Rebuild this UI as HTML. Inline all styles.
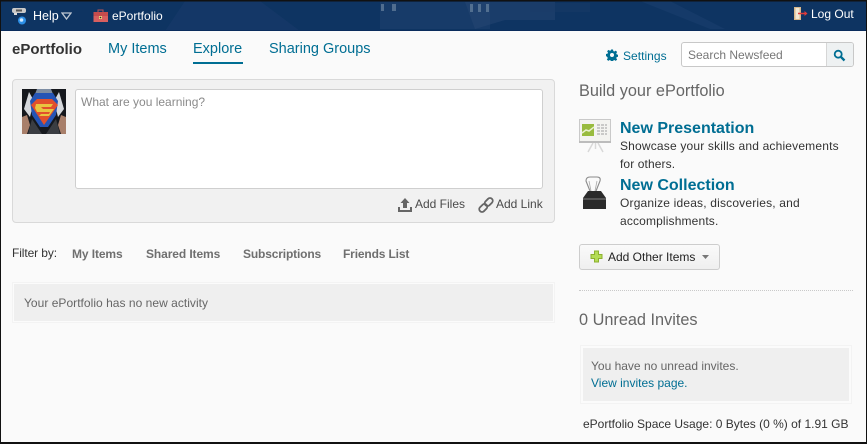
<!DOCTYPE html>
<html><head><meta charset="utf-8">
<style>
html,body{margin:0;padding:0}
body{width:867px;height:444px;overflow:hidden;position:relative;background:#fafafa;font-family:"Liberation Sans",sans-serif;font-size:12px;color:#333}
.a{position:absolute;white-space:nowrap;line-height:1}
.box{position:absolute;box-sizing:border-box}
</style></head><body>

<!-- top bar -->
<div class="box" style="left:0;top:0;width:867px;height:31px;background:#0e3462;overflow:hidden">
<svg width="867" height="31" style="position:absolute;left:0;top:0">
<path d="M165 31L185 1H260L300 31Z" fill="#17396a" opacity=".7"/>
<path d="M380 2h110v27h-110Z" fill="#1f4270" opacity=".5"/>
<path d="M465 2h90v18h-50l-30 9Z" fill="#2a4a75" opacity=".45"/>
<path d="M470 4h3v8h-3zM478 4h3v8h-3zM486 4h3v8h-3zM381 4h3v7h-3zM392 4h4v7h-4z" fill="#5f7a99" opacity=".8"/>
<path d="M640 1l70 28h15l-55-28Z" fill="#1c4070" opacity=".5"/>
<path d="M530 3h60v9h-60Z" fill="#1b3c68" opacity=".4"/>
<path d="M0 0h867v1.500H0Z" fill="#111"/>
<path d="M0 30h867v1H0Z" fill="#0a2c5c"/>
</svg>
<svg width="20" height="20" style="position:absolute;left:11px;top:7px" viewBox="0 0 20 20">
<rect x="1" y="1" width="14" height="5" rx="2" fill="#c9c9c9"/><rect x="5" y="2.500" width="6" height="2" fill="#555"/>
<path d="M3 6h3v2H3z" fill="#ddd"/><circle cx="11" cy="13.500" r="4" fill="#2c8fe6"/><circle cx="10.500" cy="13" r="1.800" fill="#cfe8ff"/>
</svg>
<div class="a" style="left:33px;top:10px;color:#fff;font-size:12.500px">Help</div>
<svg width="11" height="8" style="position:absolute;left:61px;top:12px"><path d="M1 1H10L5.500 7Z" fill="none" stroke="#bfc8d2" stroke-width="1.300"/></svg>
<svg width="16" height="14" style="position:absolute;left:93px;top:9px" viewBox="0 0 16 14">
<path d="M5 3V1h5v2" fill="none" stroke="#b55" stroke-width="1"/><rect x="0.500" y="3" width="14.500" height="10" fill="#d85f5f"/><rect x="0.500" y="3" width="14.500" height="4" fill="#c64c4c"/><rect x="6" y="7" width="3" height="3" fill="#ecd27c"/><circle cx="7.500" cy="8.500" r=".8" fill="#322"/>
</svg>
<div class="a" style="left:112px;top:10px;color:#fff;font-size:12px">ePortfolio</div>
<svg width="16" height="16" style="position:absolute;left:793px;top:5px" viewBox="0 0 16 16">
<rect x="1" y="2" width="7" height="13" fill="#d9b98d"/><rect x="2.500" y="3" width="4" height="11" fill="#f1e8d4"/>
<path d="M5 8.500h8" stroke="#e03a3a" stroke-width="1.500"/><path d="M11.500 6l3 2.500-3 2.500Z" fill="#e03a3a"/>
</svg>
<div class="a" style="left:811px;top:8px;color:#fff;font-size:12px">Log Out</div>
</div>

<!-- tabs -->
<div class="a" style="left:12px;top:42px;font-size:15px;font-weight:bold;color:#333">ePortfolio</div>
<div class="a" style="left:108px;top:42px;font-size:14.500px;color:#006e93">My Items</div>
<div class="a" style="left:193px;top:42px;font-size:14.500px;color:#006e93">Explore</div>
<div class="box" style="left:193px;top:62px;width:50px;height:2px;background:#006e93"></div>
<div class="a" style="left:269px;top:42px;font-size:14.500px;color:#006e93">Sharing Groups</div>

<!-- composer -->
<div class="box" style="left:12px;top:79px;width:543px;height:144px;background:#f1f1f1;border:1px solid #d9d9d9;border-radius:4px"></div>
<svg width="44" height="45" style="position:absolute;left:22px;top:89px" viewBox="0 0 44 45">
<rect width="44" height="45" fill="#15181d"/>
<path d="M15 0H29L31 5H13Z" fill="#7d8da3"/>
<path d="M7 3L12 12 8 28 2 20ZM37 3L32 12 36 28 42 20Z" fill="#d5d8dc"/>
<path d="M13 4H31L36 12 34 26 26 38H18L10 26 8 12Z" fill="#2554b5"/>
<path d="M9 16L15 10H30L36 16 22 36Z" fill="#e2502c"/>
<path d="M14 15H31L29 18H19L21 20H32L27 27H17L19 25H27L28 23H15L13 19Z" fill="#e9c53f"/>
<path d="M0 28L5 26 8 36 5 45H0ZM44 28L39 26 36 36 39 45H44Z" fill="#a87f6a"/>
<path d="M10 30L20 45H6ZM34 30L24 45H38Z" fill="#3a3d42"/>
</svg>
<div class="box" style="left:75px;top:89px;width:468px;height:100px;background:#fff;border:1px solid #cfcfcf;border-radius:3px"></div>
<div class="a" style="left:81px;top:96px;color:#8a8a8a;font-size:12px">What are you learning?</div>
<svg width="16" height="16" style="position:absolute;left:397px;top:197px" viewBox="0 0 16 16">
<path d="M8 1L12.500 6H10V11H6V6H3.500Z" fill="#666"/><path d="M1 10V15H15V10H13V13H3V10Z" fill="#666"/>
</svg>
<div class="a" style="left:415px;top:198px;font-size:12px;color:#4a4a4a">Add Files</div>
<svg width="16" height="16" style="position:absolute;left:478px;top:197px" viewBox="0 0 16 16">
<g fill="none" stroke="#666" stroke-width="1.800"><rect x="8" y="0.500" width="5.500" height="9" rx="2.700" transform="rotate(45 10.700 5)"/><rect x="2.500" y="6.500" width="5.500" height="9" rx="2.700" transform="rotate(45 5.300 11)"/></g>
</svg>
<div class="a" style="left:496px;top:198px;font-size:12px;color:#4a4a4a">Add Link</div>

<!-- filter -->
<div class="a" style="left:12px;top:247px;font-size:12px;letter-spacing:-.1px;color:#333">Filter by:</div>
<div class="a" style="left:72px;top:248px;font-size:12px;font-weight:bold;letter-spacing:-.1px;color:#6f6f6f">My Items</div>
<div class="a" style="left:146px;top:248px;font-size:12px;font-weight:bold;letter-spacing:-.1px;color:#6f6f6f">Shared Items</div>
<div class="a" style="left:243px;top:248px;font-size:12px;font-weight:bold;letter-spacing:-.15px;color:#6f6f6f">Subscriptions</div>
<div class="a" style="left:343px;top:248px;font-size:12px;font-weight:bold;letter-spacing:-.15px;color:#6f6f6f">Friends List</div>

<div class="box" style="left:12px;top:282px;width:543px;height:41px;background:#efefef;border:2px solid #fbfbfb;outline:1px solid #f3f3f3;outline-offset:-1px"></div>
<div class="a" style="left:24px;top:297px;font-size:12px;letter-spacing:.03px;color:#666">Your ePortfolio has no new activity</div>

<!-- right column -->
<svg width="12" height="12" style="position:absolute;left:606px;top:49px" viewBox="0 0 24 24">
<path fill="#006e93" fill-rule="evenodd" d="M10 1h4l.7 3.200 2 .8 2.800-1.800 2.800 2.800-1.800 2.800.8 2 3.200.7v4l-3.200.7-.8 2 1.800 2.800-2.800 2.800-2.800-1.800-2 .8-.7 3.200h-4l-.7-3.200-2-.8-2.800 1.800-2.800-2.800 1.800-2.800-.8-2L0 14v-4l3.200-.7.8-2L2.200 4.500 5 1.700l2.800 1.800 2-.8ZM12 8a4 4 0 1 0 0 8 4 4 0 0 0 0-8Z"/>
</svg>
<div class="a" style="left:623px;top:50px;font-size:12px;letter-spacing:.03px;color:#006e93">Settings</div>
<div class="box" style="left:681px;top:42px;width:173px;height:25px;background:#fff;border:1px solid #c8c8c8;border-radius:3px;overflow:hidden">
<div class="box" style="right:0;top:0;width:27px;height:23px;background:#eef1f2;border-left:1px solid #d6d6d6"></div>
</div>
<svg width="13" height="13" style="position:absolute;left:833px;top:49px" viewBox="0 0 13 13"><circle cx="5.200" cy="5.200" r="3.500" fill="none" stroke="#006e93" stroke-width="1.800"/><path d="M8 8l3.500 3.500" stroke="#006e93" stroke-width="2.300"/></svg>
<div class="a" style="left:688px;top:49px;font-size:12px;color:#777">Search Newsfeed</div>

<div class="a" style="left:579px;top:83px;font-size:16.300px;color:#666">Build your ePortfolio</div>

<svg width="34" height="36" style="position:absolute;left:579px;top:119px" viewBox="0 0 34 36">
<path d="M14 24L9 33M19 24L24 33M16.500 24V30" stroke="#d8d8d8" stroke-width="1.500" fill="none"/>
<rect x=".5" y=".5" width="31" height="22" fill="#f3f3f0" stroke="#c9c9c9"/>
<rect x="3" y="5" width="12" height="12" fill="#98bb3e"/>
<path d="M3 14l4-3 3 1 5-4" stroke="#e8f0cc" stroke-width="1.500" fill="none"/>
<path d="M18 6h10M18 9h10M18 12h10M18 15h10" stroke="#bbb" stroke-width="1.500" stroke-dasharray="3 1"/>
<rect x="0" y="22" width="32" height="2" fill="#bcbcbc"/>
</svg>
<div class="a" style="left:620px;top:121px;font-size:16px;font-weight:bold;color:#006e93">New Presentation</div>
<div class="a" style="left:620px;top:140px;font-size:12px;letter-spacing:.18px;color:#333">Showcase your skills and achievements</div>
<div class="a" style="left:620px;top:158px;font-size:12px;letter-spacing:.1px;color:#333">for others.</div>

<svg width="24" height="34" style="position:absolute;left:583px;top:176px" viewBox="0 0 24 34">
<path d="M7 15L3 5Q3 1 7 1H14Q18 1 17 5L13 15" fill="none" stroke="#8a8a8a" stroke-width="1.100"/>
<path d="M8 15L6 5M12 15L14 5" stroke="#aaa" stroke-width=".8"/>
<path d="M5 15H18L23 22V33H0V22Z" fill="#2b2b2b"/>
<rect x="0" y="22" width="23" height="2" fill="#555"/>
</svg>
<div class="a" style="left:620px;top:178px;font-size:16px;font-weight:bold;color:#006e93">New Collection</div>
<div class="a" style="left:620px;top:197px;font-size:12px;letter-spacing:.18px;color:#333">Organize ideas, discoveries, and</div>
<div class="a" style="left:620px;top:215px;font-size:12px;letter-spacing:.15px;color:#333">accomplishments.</div>

<div class="box" style="left:579px;top:244px;width:141px;height:26px;background:linear-gradient(#fafafa,#efefef);border:1px solid #cdcdcd;border-radius:3px"></div>
<svg width="13" height="13" style="position:absolute;left:590px;top:250px" viewBox="0 0 13 13"><path d="M4.500 1H8.500V4.500H12V8.500H8.500V12H4.500V8.500H1V4.500H4.500Z" fill="#b4dc55" stroke="#8cb02f" stroke-width="1"/></svg>
<div class="a" style="left:608px;top:251px;font-size:12px;color:#222">Add Other Items</div>
<svg width="8" height="5" style="position:absolute;left:702px;top:255px"><path d="M0 0H7L3.500 4Z" fill="#777"/></svg>

<div class="box" style="left:579px;top:290px;width:274px;height:1px;border-top:1px dotted #c9c9c9"></div>
<div class="a" style="left:579px;top:312px;font-size:16.300px;color:#666">0 Unread Invites</div>

<div class="box" style="left:580px;top:345px;width:272px;height:59px;background:#efefef;border:3px solid #fbfbfb;outline:1px solid #f3f3f3;outline-offset:-1px"></div>
<div class="a" style="left:591px;top:360px;font-size:12px;color:#666">You have no unread invites.</div>
<div class="a" style="left:591px;top:377px;font-size:12px;color:#006e93">View invites page.</div>
<div class="a" style="left:583px;top:418px;font-size:12px;color:#333">ePortfolio Space Usage: 0 Bytes (0 %) of 1.91 GB</div>

<!-- screenshot frame -->
<div class="box" style="left:0;top:0;width:867px;height:444px;border-left:1px solid #111;border-right:1px solid #111;border-bottom:2px solid #111"></div>
</body></html>
